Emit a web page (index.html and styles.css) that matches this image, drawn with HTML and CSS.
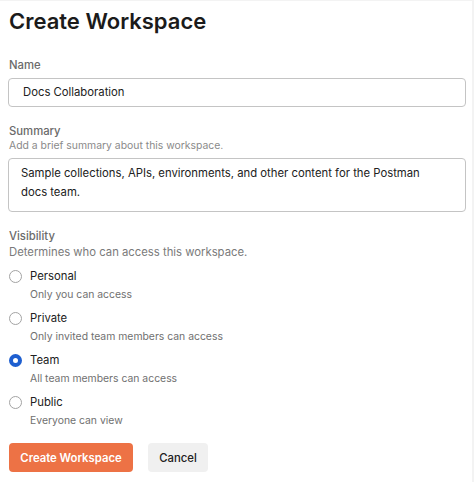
FILE: index.html
```html
<!DOCTYPE html>
<html>
<head>
<meta charset="utf-8">
<link rel="stylesheet" href="styles.css">
</head>
<body>
<div class="page">
  <h1 class="title">Create Workspace</h1>

  <div class="field field-name">
    <div class="label">Name</div>
    <div class="input">Docs Collaboration</div>
  </div>

  <div class="field field-summary">
    <div class="label">Summary</div>
    <div class="hint">Add a brief summary about this workspace.</div>
    <div class="textarea">Sample collections, APIs, environments, and other content for the Postman docs team.</div>
  </div>

  <div class="field field-visibility">
    <div class="label">Visibility</div>
    <div class="hint hint-lg">Determines who can access this workspace.</div>
    <div class="options">
      <div class="option">
        <span class="radio"></span>
        <div class="opt-text">
          <div class="opt-title">Personal</div>
          <div class="opt-desc">Only you can access</div>
        </div>
      </div>
      <div class="option">
        <span class="radio"></span>
        <div class="opt-text">
          <div class="opt-title">Private</div>
          <div class="opt-desc">Only invited team members can access</div>
        </div>
      </div>
      <div class="option">
        <span class="radio radio-on"></span>
        <div class="opt-text">
          <div class="opt-title">Team</div>
          <div class="opt-desc">All team members can access</div>
        </div>
      </div>
      <div class="option">
        <span class="radio"></span>
        <div class="opt-text">
          <div class="opt-title">Public</div>
          <div class="opt-desc">Everyone can view</div>
        </div>
      </div>
    </div>
  </div>

  <div class="actions">
    <button class="btn btn-primary">Create Workspace</button>
    <button class="btn btn-secondary">Cancel</button>
  </div>
</div>
</body>
</html>
```

FILE: styles.css
```css
html, body {
  margin: 0;
  padding: 0;
  background: #ffffff;
}
body {
  font-family: Inter, "Noto Sans", sans-serif;
  color: #212121;
  width: 474px;
  height: 482px;
  box-sizing: border-box;
  border-top: 1px solid #f3f3f3;
  border-right: 2px solid #f3f3f3;
  overflow: hidden;
}
.page {
  padding: 7px 0 0 8px;
  width: 458px;
}
.title {
  margin: 0;
  font-size: 22px;
  line-height: 26px;
  font-weight: 600;
  color: #1b1b1b;
  padding-left: 1px;
}
.label {
  font-size: 11.3px;
  line-height: 14px;
  font-weight: 500;
  color: #6b6b6b;
  padding-left: 1px;
}
.hint {
  margin-top: 1px;
  font-size: 10.4px;
  line-height: 13px;
  color: #8a8a8a;
  padding-left: 1px;
}
.hint-lg {
  margin-top: 2px;
  font-size: 11.3px;
  line-height: 14px;
  color: #7a7a7a;
}
.field-name {
  margin-top: 24px;
}
.input {
  margin-top: 6px;
  height: 29px;
  box-sizing: border-box;
  border: 1px solid #c4c4c4;
  border-radius: 4px;
  padding: 0 14px;
  font-size: 11.3px;
  line-height: 27px;
  color: #212121;
}
.field-summary {
  margin-top: 17px;
}
.textarea {
  margin-top: 6px;
  height: 54px;
  box-sizing: border-box;
  border: 1px solid #c4c4c4;
  border-radius: 4px;
  padding: 5px 30px 5px 12px;
  font-size: 11.3px;
  line-height: 19px;
  color: #212121;
}
.field-visibility {
  margin-top: 17px;
}
.options {
  margin-top: 10px;
  display: flex;
  flex-direction: column;
  gap: 10px;
}
.option {
  display: flex;
  align-items: flex-start;
  gap: 8px;
}
.radio {
  flex: none;
  width: 13px;
  height: 13px;
  box-sizing: border-box;
  border: 1px solid #a3a3a3;
  border-radius: 50%;
  margin-top: 1px;
  margin-left: 1px;
  background: #fff;
}
.radio-on {
  border: 4px solid #1e5fd0;
}
.opt-title {
  font-size: 11.3px;
  line-height: 14px;
  color: #212121;
}
.opt-desc {
  margin-top: 5px;
  font-size: 10.4px;
  line-height: 13px;
  color: #707070;
}
.actions {
  margin-top: 16px;
  margin-left: 1px;
  display: flex;
  gap: 15px;
}
.btn {
  font-family: Inter, "Noto Sans", sans-serif;
  height: 29px;
  border: none;
  border-radius: 4px;
  font-size: 11.3px;
  padding: 0;
  cursor: pointer;
}
.btn-primary {
  background: #ed7245;
  color: #ffffff;
  font-weight: 600;
  width: 124px;
}
.btn-secondary {
  background: #f0f0f0;
  color: #212121;
  font-weight: 500;
  width: 60px;
}
```
